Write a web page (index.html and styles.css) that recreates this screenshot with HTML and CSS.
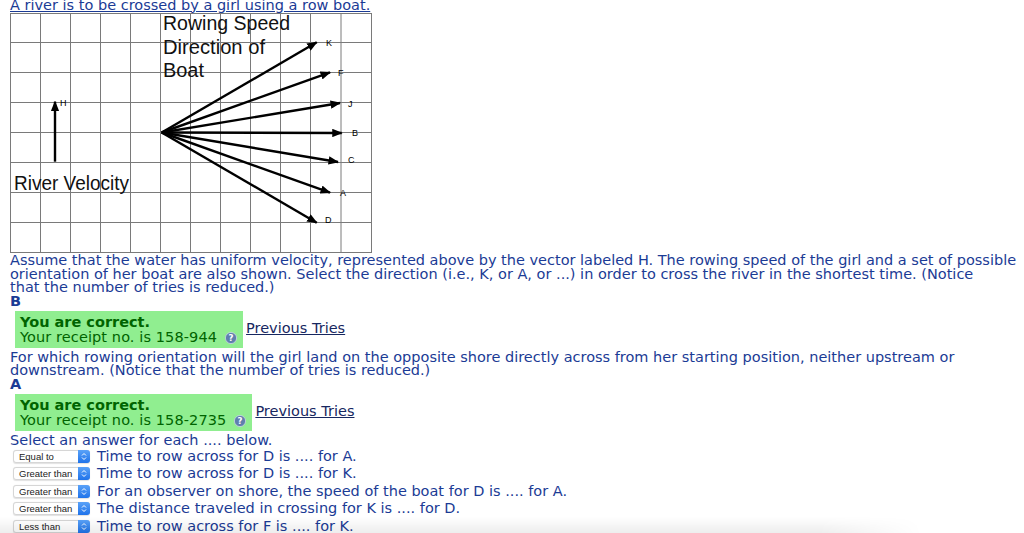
FILE: index.html
```html
<!DOCTYPE html>
<html>
<head>
<meta charset="utf-8">
<link rel="stylesheet" href="styles.css">
</head>
<body>
<div class="page">
  <a class="title" href="#">A river is to be crossed by a girl using a row boat.</a>
  <svg class="diagram" width="363" height="242" viewBox="0 0 363 242">
    <defs>
      <marker id="ah" viewBox="0 0 10 8" refX="9" refY="4" markerWidth="4.4" markerHeight="3.5" orient="auto" markerUnits="strokeWidth">
        <path d="M0,0 L10,4 L0,8 Z" fill="#000"/>
      </marker>
    </defs>
    <g class="grid">
      <line x1="0.5" y1="1" x2="0.5" y2="241"/>
      <line x1="30.5" y1="1" x2="30.5" y2="241"/>
      <line x1="60.5" y1="1" x2="60.5" y2="241"/>
      <line x1="90.5" y1="1" x2="90.5" y2="241"/>
      <line x1="120.5" y1="1" x2="120.5" y2="241"/>
      <line x1="150.5" y1="1" x2="150.5" y2="241"/>
      <line x1="180.5" y1="1" x2="180.5" y2="241"/>
      <line x1="210.5" y1="1" x2="210.5" y2="241"/>
      <line x1="240.5" y1="1" x2="240.5" y2="241"/>
      <line x1="270.5" y1="1" x2="270.5" y2="241"/>
      <line x1="300.5" y1="1" x2="300.5" y2="241"/>
      <line x1="331" y1="1" x2="331" y2="241"/>
      <line x1="361.5" y1="1" x2="361.5" y2="241"/>
      <line x1="0" y1="1.5" x2="362" y2="1.5"/>
      <line x1="0" y1="30.5" x2="362" y2="30.5"/>
      <line x1="0" y1="60.5" x2="362" y2="60.5"/>
      <line x1="0" y1="90.5" x2="362" y2="90.5"/>
      <line x1="0" y1="120.5" x2="362" y2="120.5"/>
      <line x1="0" y1="150.5" x2="362" y2="150.5"/>
      <line x1="0" y1="180.5" x2="362" y2="180.5"/>
      <line x1="0" y1="210.5" x2="362" y2="210.5"/>
      <line x1="0" y1="240.5" x2="362" y2="240.5"/>
    </g>
    <g class="vec">
      <line x1="151.7" y1="120.5" x2="306.7" y2="30.3" marker-end="url(#ah)"/>
      <line x1="151.7" y1="120.5" x2="320" y2="60.3" marker-end="url(#ah)"/>
      <line x1="151.7" y1="120.5" x2="330" y2="91" marker-end="url(#ah)"/>
      <line x1="151.7" y1="120.5" x2="331.7" y2="121" marker-end="url(#ah)"/>
      <line x1="151.7" y1="120.5" x2="328" y2="150" marker-end="url(#ah)"/>
      <line x1="151.7" y1="120.5" x2="320" y2="180.7" marker-end="url(#ah)"/>
      <line x1="151.7" y1="120.5" x2="306.7" y2="210.7" marker-end="url(#ah)"/>
      <line x1="45" y1="149.7" x2="45" y2="89.7" marker-end="url(#ah)"/>
    </g>
    <g class="big">
      <text x="153" y="18" textLength="127" lengthAdjust="spacingAndGlyphs">Rowing Speed</text>
      <text x="153" y="41.5" textLength="102" lengthAdjust="spacingAndGlyphs">Direction of</text>
      <text x="153" y="65" textLength="41" lengthAdjust="spacingAndGlyphs">Boat</text>
      <text x="4" y="178" textLength="115" lengthAdjust="spacingAndGlyphs">River Velocity</text>
    </g>
    <g class="lbl">
      <text x="316" y="34">K</text>
      <text x="328" y="64">F</text>
      <text x="338" y="95">J</text>
      <text x="342" y="124">B</text>
      <text x="338" y="151">C</text>
      <text x="330" y="184">A</text>
      <text x="315" y="211">D</text>
      <text x="50" y="94">H</text>
    </g>
  </svg>

  <p class="text">Assume that the water has uniform velocity, represented above by the vector labeled H. The rowing speed of the girl and a set of possible<br>orientation of her boat are also shown. Select the direction (i.e., K, or A, or ...) in order to cross the river in the shortest time. (Notice<br>that the number of tries is reduced.)</p>
  <div class="answer">B</div>
  <div class="result">
    <div class="correct">
      <div class="ok">You are correct.</div>
      <div class="receipt">Your receipt no. is 158-944 <svg class="help" width="12" height="12" viewBox="0 0 12 12"><circle cx="6" cy="6" r="5.6" fill="#5f7fae" stroke="#c9d4e4" stroke-width="0.8"/><text x="6" y="9.2" text-anchor="middle">?</text></svg></div>
    </div>
    <a class="prev" href="#">Previous Tries</a>
  </div>

  <p class="text">For which rowing orientation will the girl land on the opposite shore directly across from her starting position, neither upstream or<br>downstream. (Notice that the number of tries is reduced.)</p>
  <div class="answer">A</div>
  <div class="result">
    <div class="correct">
      <div class="ok">You are correct.</div>
      <div class="receipt">Your receipt no. is 158-2735 <svg class="help" width="12" height="12" viewBox="0 0 12 12"><circle cx="6" cy="6" r="5.6" fill="#5f7fae" stroke="#c9d4e4" stroke-width="0.8"/><text x="6" y="9.2" text-anchor="middle">?</text></svg></div>
    </div>
    <a class="prev" href="#">Previous Tries</a>
  </div>

  <p class="text">Select an answer for each .... below.</p>
  <ul class="choices">
    <li><span class="sel">Equal to<span class="step"><svg width="8" height="9" viewBox="0 0 8 9"><path d="M2,3.5 L4,1.5 L6,3.5 M2,5.5 L4,7.5 L6,5.5" fill="none" stroke="#fff" stroke-width="1"/></svg></span></span><span class="stmt">Time to row across for D is .... for A.</span></li>
    <li><span class="sel">Greater than<span class="step"><svg width="8" height="9" viewBox="0 0 8 9"><path d="M2,3.5 L4,1.5 L6,3.5 M2,5.5 L4,7.5 L6,5.5" fill="none" stroke="#fff" stroke-width="1"/></svg></span></span><span class="stmt">Time to row across for D is .... for K.</span></li>
    <li><span class="sel">Greater than<span class="step"><svg width="8" height="9" viewBox="0 0 8 9"><path d="M2,3.5 L4,1.5 L6,3.5 M2,5.5 L4,7.5 L6,5.5" fill="none" stroke="#fff" stroke-width="1"/></svg></span></span><span class="stmt">For an observer on shore, the speed of the boat for D is .... for A.</span></li>
    <li><span class="sel">Greater than<span class="step"><svg width="8" height="9" viewBox="0 0 8 9"><path d="M2,3.5 L4,1.5 L6,3.5 M2,5.5 L4,7.5 L6,5.5" fill="none" stroke="#fff" stroke-width="1"/></svg></span></span><span class="stmt">The distance traveled in crossing for K is .... for D.</span></li>
    <li><span class="sel">Less than<span class="step"><svg width="8" height="9" viewBox="0 0 8 9"><path d="M2,3.5 L4,1.5 L6,3.5 M2,5.5 L4,7.5 L6,5.5" fill="none" stroke="#fff" stroke-width="1"/></svg></span></span><span class="stmt">Time to row across for F is .... for K.</span></li>
  </ul>
</div>
<div class="shade"></div>
</body>
</html>
```

FILE: styles.css
```css
html, body {
  margin: 0;
  padding: 0;
  background: #fff;
  overflow: hidden;
}
body {
  font-family: "DejaVu Sans", Verdana, sans-serif;
  font-size: 14.5px;
  line-height: 13.5px;
  color: #1b3b95;
}
.page {
  padding: 0 0 0 10px;
  margin-top: -2.5px;
}
.title {
  display: block;
  color: #1b3b95;
  text-decoration: underline;
  line-height: 14.5px;
  width: max-content;
}
.diagram {
  display: block;
}
.grid line {
  stroke: #7a7a7a;
  stroke-width: 1;
}
.vec line {
  stroke: #000;
  stroke-width: 2.4;
}
.big text {
  font-family: "Liberation Sans", Arial, sans-serif;
  font-size: 19.5px;
  fill: #111;
}
.lbl text {
  font-family: "Liberation Sans", Arial, sans-serif;
  font-size: 9px;
  fill: #000;
}
.text {
  margin: 0;
}
.answer {
  font-weight: bold;
}
.result {
  display: flex;
  align-items: center;
  margin: 2.5px 0 3px 5px;
}
.correct {
  background: #90ee90;
  color: #006400;
  padding: 4.5px 6px 3.5px 5px;
  line-height: 14.5px;
}
.ok {
  font-weight: bold;
}
.receipt {
  display: flex;
  align-items: center;
  gap: 8px;
  height: 14.5px;
  letter-spacing: 0.1px;
}
.help {
  margin-top: 2px;
}
.help text {
  font-family: "DejaVu Sans", sans-serif;
  font-size: 8.5px;
  font-weight: bold;
  fill: #fff;
}
.prev {
  color: #17275f;
  text-decoration: underline;
  margin-left: 3px;
  margin-top: -1px;
}
.choices {
  list-style: none;
  margin: 0.5px 0 0 0;
  padding: 0;
}
.choices li {
  display: flex;
  align-items: center;
  height: 17.5px;
}
.sel {
  display: flex;
  align-items: center;
  justify-content: space-between;
  box-sizing: border-box;
  width: 77px;
  height: 13px;
  margin-left: 3px;
  padding-left: 5px;
  background: #fff;
  border: 1px solid #d6d6d6;
  border-radius: 3px;
  font-family: "Liberation Sans", Arial, sans-serif;
  font-size: 9.5px;
  color: #222;
  box-shadow: 0 0.5px 1px rgba(0,0,0,0.12);
}
.step {
  display: flex;
  align-items: center;
  justify-content: center;
  width: 12px;
  height: 13px;
  margin-right: -1px;
  background: linear-gradient(#5aa2f8, #1f73ea);
  border-radius: 0 3px 3px 0;
}
.step svg {
  display: block;
}
.stmt {
  margin-left: 7px;
}
.shade {
  position: absolute;
  left: 0;
  right: 0;
  bottom: 0;
  height: 16px;
  background: linear-gradient(to bottom, rgba(0,0,0,0), rgba(0,0,0,0.07));
  -webkit-mask-image: linear-gradient(to right, #000 0%, #000 80%, transparent 90%);
  mask-image: linear-gradient(to right, #000 0%, #000 80%, transparent 90%);
  pointer-events: none;
}
```
